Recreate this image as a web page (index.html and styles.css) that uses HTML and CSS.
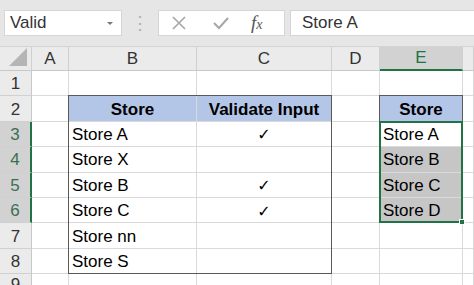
FILE: index.html
```html
<!DOCTYPE html>
<html lang="en">
<head>
  <meta charset="UTF-8">
  <title>Validate Input</title>
  <link rel="stylesheet" href="styles.css">
</head>
<body>
  <div class="toolbar">
    <div class="name-box">
      <span>Valid</span>
      <span class="caret"></span>
    </div>
    <div class="grip">&#8942;</div>
    <div class="fx-box">
      <svg class="ic" width="16" height="16" viewBox="0 0 16 16"><path d="M2 2 L14 14 M14 2 L2 14" stroke="#a6a6a6" stroke-width="1.6" fill="none"/></svg>
      <svg class="ic" width="18" height="16" viewBox="0 0 18 16"><path d="M2 8 L7 13 L16 3" stroke="#a6a6a6" stroke-width="2" fill="none"/></svg>
      <span class="fx">f<i>x</i></span>
    </div>
    <div class="formula">Store A</div>
  </div>

  <div class="sheet">
    <div class="grid">
      <!-- column headers -->
      <div class="corner"><span class="tri"></span></div>
      <div class="colh">A</div>
      <div class="colh">B</div>
      <div class="colh">C</div>
      <div class="colh">D</div>
      <div class="colh sel">E</div>
      <div class="colh"></div>

      <!-- row 1 -->
      <div class="rowh">1</div>
      <div class="cell"></div><div class="cell"></div><div class="cell"></div><div class="cell"></div><div class="cell"></div><div class="cell"></div>

      <!-- row 2 -->
      <div class="rowh">2</div>
      <div class="cell"></div>
      <div class="cell head">Store</div>
      <div class="cell head">Validate Input</div>
      <div class="cell"></div>
      <div class="cell head">Store</div>
      <div class="cell"></div>

      <!-- row 3 -->
      <div class="rowh sel">3</div>
      <div class="cell"></div>
      <div class="cell">Store A</div>
      <div class="cell tick">&#10003;</div>
      <div class="cell"></div>
      <div class="cell">Store A</div>
      <div class="cell"></div>

      <!-- row 4 -->
      <div class="rowh sel">4</div>
      <div class="cell"></div>
      <div class="cell">Store X</div>
      <div class="cell tick"></div>
      <div class="cell"></div>
      <div class="cell grey">Store B</div>
      <div class="cell"></div>

      <!-- row 5 -->
      <div class="rowh sel">5</div>
      <div class="cell"></div>
      <div class="cell">Store B</div>
      <div class="cell tick">&#10003;</div>
      <div class="cell"></div>
      <div class="cell grey">Store C</div>
      <div class="cell"></div>

      <!-- row 6 -->
      <div class="rowh sel">6</div>
      <div class="cell"></div>
      <div class="cell">Store C</div>
      <div class="cell tick">&#10003;</div>
      <div class="cell"></div>
      <div class="cell grey">Store D</div>
      <div class="cell"></div>

      <!-- row 7 -->
      <div class="rowh">7</div>
      <div class="cell"></div>
      <div class="cell">Store nn</div>
      <div class="cell"></div><div class="cell"></div><div class="cell"></div><div class="cell"></div>

      <!-- row 8 -->
      <div class="rowh">8</div>
      <div class="cell"></div>
      <div class="cell">Store S</div>
      <div class="cell"></div><div class="cell"></div><div class="cell"></div><div class="cell"></div>

      <!-- row 9 -->
      <div class="rowh">9</div>
      <div class="cell"></div><div class="cell"></div><div class="cell"></div><div class="cell"></div><div class="cell"></div><div class="cell"></div>
    </div>

    <!-- table borders and selection drawn over the cells -->
    <div class="grid overlay">
      <div class="frame-main"></div>
      <div class="frame-list"></div>
      <div class="frame-sel"><span class="handle"></span></div>
    </div>
  </div>
</body>
</html>
```

FILE: styles.css
```css
/* Sheet look */
* {
  margin: 0;
  padding: 0;
  box-sizing: border-box;
}

body {
  width: 474px;
  height: 285px;
  overflow: hidden;
  background: #ffffff;
  font-family: 'Liberation Sans', Arial, sans-serif;
  color: #000;
}

.toolbar {
  height: 47px;
  background: #e6e6e6;
  display: flex;
  align-items: flex-start;
  padding-top: 10px;
  padding-left: 4px;
  border-bottom: 1px solid #d4d4d4;
}

.name-box {
  width: 118px;
  height: 26px;
  background: #fff;
  border: 1px solid #d6d6d6;
  display: flex;
  align-items: center;
  justify-content: space-between;
  padding: 0 8px 0 5px;
  font-size: 17px;
  color: #333;
}

.caret {
  width: 0;
  height: 0;
  border-left: 3px solid transparent;
  border-right: 3px solid transparent;
  border-top: 3px solid #777;
}

.grip {
  width: 36px;
  text-align: center;
  color: #b0b0b0;
  font-size: 18px;
  line-height: 26px;
}

.fx-box {
  width: 127px;
  height: 26px;
  background: #fff;
  border: 1px solid #d6d6d6;
  display: flex;
  align-items: center;
  padding-left: 12px;
  gap: 27px;
}

.fx-box .ic:nth-child(2) {
  margin-left: -2px;
}

.fx {
  font-family: 'Liberation Serif', serif;
  font-style: italic;
  font-size: 19px;
  color: #555;
  margin-left: -6px;
}

.fx i {
  font-size: 14px;
}

.formula {
  flex: 1;
  height: 26px;
  margin-left: 5px;
  background: #fff;
  border: 1px solid #d6d6d6;
  border-right: none;
  font-size: 17px;
  color: #333;
  line-height: 24px;
  padding-left: 11px;
}

.sheet {
  position: relative;
  height: 238px;
  overflow: hidden;
}

.grid {
  display: grid;
  grid-template-columns: 32px 37px 128px 135px 48px 83px 1fr;
  grid-template-rows: 24px repeat(8, 25.4px) 20px;
  font-size: 17px;
}

.overlay {
  position: absolute;
  inset: 0;
  pointer-events: none;
}

.corner, .colh {
  background: #ebebeb;
  border-right: 1px solid #d0d0d0;
  border-bottom: 1px solid #c8c8c8;
}

.corner {
  position: relative;
}

.tri {
  position: absolute;
  right: 4px;
  bottom: 4px;
  width: 0;
  height: 0;
  border-left: 18px solid transparent;
  border-bottom: 18px solid #b5b5b5;
}

.colh {
  display: flex;
  align-items: center;
  justify-content: center;
  color: #333;
}

.colh.sel {
  background: #d2d2d2;
  color: #217346;
  border-bottom: 2px solid #217346;
}

.rowh {
  background: #ebebeb;
  border-right: 1px solid #c8c8c8;
  border-bottom: 1px solid #d0d0d0;
  display: flex;
  align-items: center;
  justify-content: center;
  color: #333;
  padding-top: 2px;
}

.rowh.sel {
  background: #d2d2d2;
  color: #3c6e52;
  border-right: 2px solid #217346;
}

.cell {
  border-right: 1px solid #dadada;
  border-bottom: 1px solid #dadada;
  padding: 2px 0 0 3px;
  display: flex;
  align-items: center;
  white-space: nowrap;
}

.cell.head {
  background: #b4c6e7;
  font-weight: bold;
  justify-content: center;
  padding-left: 0;
}

.cell.tick {
  justify-content: center;
  padding-left: 0;
  font-family: 'DejaVu Sans', sans-serif;
  font-size: 16px;
  font-weight: bold;
}

.cell.grey {
  background: #c6c6c6;
}

.frame-main {
  grid-row: 3 / 10;
  grid-column: 3 / 5;
  border: 1px solid #595959;
  margin: -1px 0 0 -1px;
}

.frame-list {
  grid-row: 3 / 4;
  grid-column: 6 / 7;
  border: 1px solid #595959;
  margin: -1px 0 0 -1px;
}

.frame-sel {
  grid-row: 4 / 8;
  grid-column: 6 / 7;
  border: 2px solid #217346;
  margin: -1px 0 0 -1px;
  position: relative;
}

.handle {
  position: absolute;
  right: -4px;
  bottom: -4px;
  width: 6px;
  height: 6px;
  background: #217346;
  border: 1px solid #fff;
}
```
